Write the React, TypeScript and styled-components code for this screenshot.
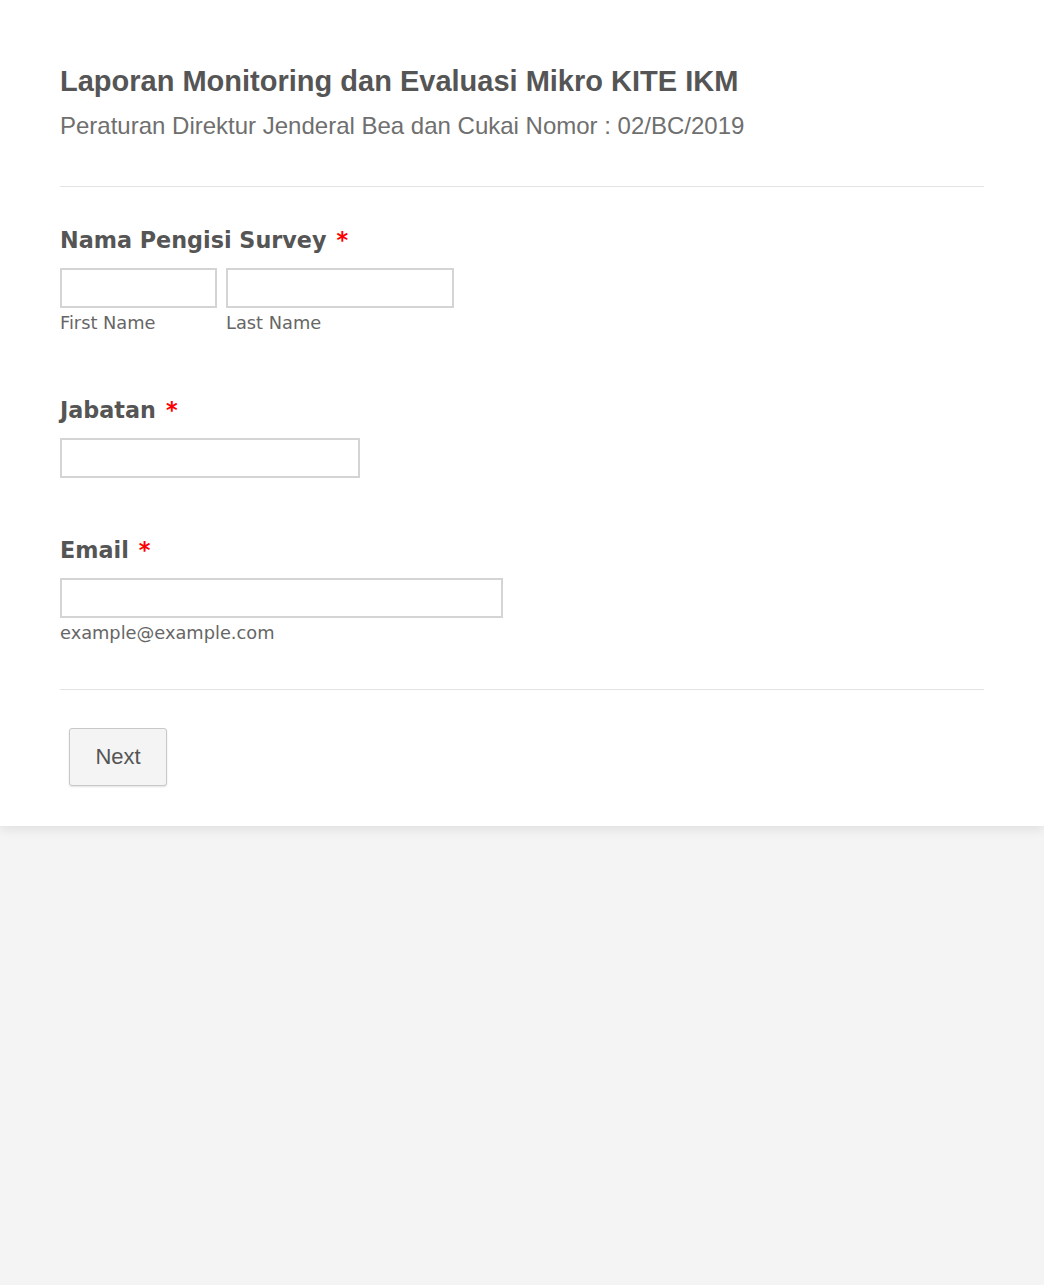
import React from "react";
import styled, { createGlobalStyle } from "styled-components";

const Global = createGlobalStyle`
  html, body { margin: 0; padding: 0; background: #f4f4f4; }
  body { min-height: 1285px; }
`;

const Card = styled.div`
  background: #fff;
  box-shadow: 0 4px 10px rgba(0,0,0,0.08);
  padding: 62px 60px 40px 60px;
  box-sizing: border-box;
  height: 826px;
`;

const Header = styled.div`
  padding-bottom: 45px;
  border-bottom: 1px solid #e3e3e3;
`;

const Title = styled.h1`
  margin: 0;
  font-family: "Liberation Sans", Arial, sans-serif;
  font-weight: bold;
  font-size: 29px;
  line-height: 38px;
  color: #555;
`;

const Subtitle = styled.div`
  margin-top: 11px;
  font-family: "Liberation Sans", Arial, sans-serif;
  font-size: 24px;
  line-height: 30px;
  color: #6f6f6f;
`;

const Field = styled.div<{ $mt: number }>`
  margin-top: ${(p) => p.$mt}px;
`;

const Label = styled.div`
  font-family: "DejaVu Sans", Verdana, sans-serif;
  font-weight: bold;
  font-size: 22.3px;
  line-height: 28px;
  color: #555;
  margin-bottom: 14px;
`;

const Star = styled.span`
  color: #f00;
  margin-left: 10px;
`;

const Row = styled.div`
  display: flex;
  gap: 9px;
`;

const Col = styled.div`
  display: flex;
  flex-direction: column;
`;

const Input = styled.input<{ $w: number }>`
  width: ${(p) => p.$w}px;
  height: 40px;
  box-sizing: border-box;
  border: 2px solid #d4d4d4;
  background: #fff;
  margin: 0;
  padding: 0 6px;
  outline: none;
`;

const Sub = styled.div`
  font-family: "DejaVu Sans", Verdana, sans-serif;
  font-size: 17.8px;
  line-height: 20px;
  margin-top: 5px;
  color: #666;
`;

const Divider = styled.div`
  margin-top: 46px;
  border-top: 1px solid #e3e3e3;
`;

const Button = styled.button`
  margin: 38px 0 0 9px;
  width: 98px;
  height: 58px;
  background: #f4f4f4;
  border: 1px solid #c8c8c8;
  border-radius: 3px;
  box-shadow: 0 1px 2px rgba(0,0,0,0.12);
  font-family: "Liberation Sans", Arial, sans-serif;
  font-size: 22px;
  color: #555;
  cursor: pointer;
`;

export default function App() {
  return (
    <>
      <Global />
      <Card>
        <Header>
          <Title>Laporan Monitoring dan Evaluasi Mikro KITE IKM</Title>
          <Subtitle>Peraturan Direktur Jenderal Bea dan Cukai Nomor : 02/BC/2019</Subtitle>
        </Header>
        <Field $mt={39}>
          <Label>
            Nama Pengisi Survey<Star>*</Star>
          </Label>
          <Row>
            <Col>
              <Input $w={157} />
              <Sub>First Name</Sub>
            </Col>
            <Col>
              <Input $w={228} />
              <Sub>Last Name</Sub>
            </Col>
          </Row>
        </Field>
        <Field $mt={63}>
          <Label>
            Jabatan<Star>*</Star>
          </Label>
          <Input $w={300} />
        </Field>
        <Field $mt={58}>
          <Label>
            Email<Star>*</Star>
          </Label>
          <Input $w={443} />
          <Sub>example@example.com</Sub>
        </Field>
        <Divider />
        <Button>Next</Button>
      </Card>
    </>
  );
}
